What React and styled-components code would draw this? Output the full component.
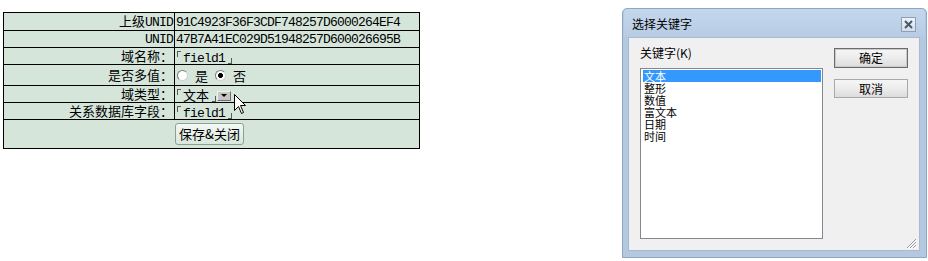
import React from "react"
import styled, { createGlobalStyle } from "styled-components"

const GlobalStyle = createGlobalStyle`
  body {
    margin: 0;
    background: #ffffff;
  }
`

const Page = styled.div`
  display: flex;
  align-items: flex-start;
  width: 928px;
  height: 261px;
  overflow: hidden;
  font-family: "Noto Sans CJK SC", sans-serif;
`

/* ---------- the Notes form ---------- */

const Form = styled.table`
  margin: 12px 0 0 3px;
  width: 417px;
  border-collapse: collapse;
  background: #d5e5da;
  font-family: "Noto Sans CJK SC", sans-serif;
  font-size: 13px;
  color: #000;
`

const Row = styled.tr`
  height: ${p => p.h}px;
`

const Label = styled.td`
  width: 169px;
  padding: 0 1px 0 0;
  border: 1px solid #000;
  text-align: right;
  white-space: nowrap;
  line-height: 14px;
`

const Value = styled.td`
  padding: 0 0 0 1px;
  border: 1px solid #000;
  white-space: nowrap;
  line-height: 14px;
`

const Wide = styled.td`
  padding: 0 0 0 171px;
  border: 1px solid #000;
`

const Mono = styled.span`
  font-family: "Liberation Mono", monospace;
  font-size: 13px;
  letter-spacing: -0.8px;
`

const Field = styled.span`
  display: inline-flex;
  height: 14px;
  vertical-align: middle;
  position: relative;
`

const Mark = styled.span`
  width: 3px;
  height: 5px;
  border-color: #5a5a5a;
  border-style: solid;
  border-width: ${p => (p.end ? "0 1px 1px 0" : "1px 0 0 1px")};
  align-self: ${p => (p.end ? "flex-end" : "flex-start")};
  margin: ${p => (p.end ? "0 1px 0 3px" : "1px 2px 0 1px")};
`

const FieldText = styled.span`
  line-height: 14px;
`

const Radios = styled.span`
  display: inline-flex;
  align-items: center;
  gap: 7px;
  vertical-align: middle;
  padding-left: 1px;
`

const Radio = styled.span`
  width: 11px;
  height: 11px;
  box-sizing: border-box;
  border-radius: 50%;
  border: 1px solid;
  border-color: #7a7a7a #d0d0d0 #d0d0d0 #7a7a7a;
  background: ${p =>
    p.checked
      ? "radial-gradient(circle, #000 0 2.2px, #fff 2.6px)"
      : "#fff"};
`

const DropButton = styled.span`
  width: 14px;
  height: 10px;
  align-self: flex-end;
  margin-bottom: 1px;
  box-sizing: border-box;
  background: #c6c6c6;
  border: 1px solid;
  border-color: #f0f0f0 #6f6f6f #6f6f6f #f0f0f0;
  display: flex;
  align-items: center;
  justify-content: center;

  &::after {
    content: "";
    border-left: 3px solid transparent;
    border-right: 3px solid transparent;
    border-top: 3px solid #000;
  }
`

const Pointer = styled.svg`
  position: absolute;
  left: 58px;
  top: 6px;
  pointer-events: none;
`

const SaveButton = styled.button`
  width: 69px;
  height: 22px;
  padding: 0;
  border: 1px solid #87a392;
  border-radius: 3px;
  background: linear-gradient(#f3f8f4, #d9e7dd);
  font-family: "Noto Sans CJK SC", sans-serif;
  font-size: 13px;
  line-height: 18px;
  color: #000;
  vertical-align: middle;
`

const Arrow = () => (
  <Pointer width="13" height="21" viewBox="0 0 13 21">
    <path
      d="M0.5 0.5 L0.5 16.5 L4.5 12.5 L7.5 19.5 L9.5 18.5 L6.5 11.5 L11.5 11.5 Z"
      fill="#fff"
      stroke="#000"
      strokeWidth="1"
    />
  </Pointer>
)

const NotesForm = () => (
  <Form>
    <tbody>
      <Row h={18}>
        <Label>
          上级<Mono>UNID</Mono>
        </Label>
        <Value>
          <Mono>91C4923F36F3CDF748257D6000264EF4</Mono>
        </Value>
      </Row>
      <Row h={17}>
        <Label>
          <Mono>UNID</Mono>
        </Label>
        <Value>
          <Mono>47B7A41EC029D51948257D600026695B</Mono>
        </Value>
      </Row>
      <Row h={17}>
        <Label>域名称：</Label>
        <Value>
          <Field>
            <Mark />
            <FieldText>
              <Mono>field1</Mono>
            </FieldText>
            <Mark end />
          </Field>
        </Value>
      </Row>
      <Row h={21}>
        <Label>是否多值：</Label>
        <Value>
          <Radios>
            <Radio />
            <span>是</span>
            <Radio checked />
            <span>否</span>
          </Radios>
        </Value>
      </Row>
      <Row h={17}>
        <Label>域类型：</Label>
        <Value>
          <Field>
            <Mark />
            <FieldText>文本</FieldText>
            <Mark end />
            <DropButton />
            <Arrow />
          </Field>
        </Value>
      </Row>
      <Row h={17}>
        <Label>关系数据库字段：</Label>
        <Value>
          <Field>
            <Mark />
            <FieldText>
              <Mono>field1</Mono>
            </FieldText>
            <Mark end />
          </Field>
        </Value>
      </Row>
      <Row h={29}>
        <Wide colSpan={2}>
          <SaveButton>保存&amp;关闭</SaveButton>
        </Wide>
      </Row>
    </tbody>
  </Form>
)

/* ---------- the keyword dialog ---------- */

const Dialog = styled.div`
  margin: 8px 1px 0 auto;
  width: 305px;
  height: 250px;
  box-sizing: border-box;
  display: flex;
  flex-direction: column;
  background: #b4c9e0;
  border: 1px solid #8ba6c7;
  border-radius: 5px 5px 0 0;
  padding: 0 6px 6px 5px;
  font-family: "Noto Sans CJK SC", sans-serif;
  font-size: 12px;
  color: #000;
`

const TitleBar = styled.div`
  height: 28px;
  flex: none;
  display: flex;
  align-items: center;
  justify-content: space-between;
  background: linear-gradient(#c4d7ec, #b7cce4);
  margin: 0 -5px 0 -4px;
  padding: 0 9px 0 8px;
  border-radius: 4px 4px 0 0;
`

const Title = styled.span`
  font-size: 12px;
  line-height: 14px;
  margin-top: 2px;
`

const CloseButton = styled.button`
  width: 15px;
  height: 15px;
  padding: 0;
  margin-top: 2px;
  box-sizing: border-box;
  border: 1px solid #8d9fb5;
  background: linear-gradient(#eef3f9, #d3deea);
  display: flex;
  align-items: center;
  justify-content: center;
`

const Client = styled.div`
  flex: 1;
  position: relative;
  display: grid;
  grid-template-columns: 183px 74px;
  column-gap: 11px;
  align-items: start;
  padding: 9px 0 0 11px;
  background: #f0f0f0;
  border: 1px solid #a5bbd5;
`

const Column = styled.div`
  display: flex;
  flex-direction: column;
`

const FieldLabel = styled.div`
  line-height: 12px;
  margin-bottom: 9px;
`

const ListBox = styled.div`
  width: 183px;
  height: 171px;
  box-sizing: border-box;
  border: 1px solid #828790;
  background: #fff;
  padding: 1px 1px 0 2px;
`

const Item = styled.div`
  height: 12px;
  line-height: 12px;
  font-size: 11px;
  padding-left: 1px;
  background: ${p => (p.selected ? "#3399ff" : "transparent")};
  color: ${p => (p.selected ? "#fff" : "#000")};
`

const Buttons = styled.div`
  display: flex;
  flex-direction: column;
  gap: 11px;
  margin-top: 1px;
`

const PushButton = styled.button`
  width: 74px;
  height: ${p => (p.primary ? 20 : 19)}px;
  padding: 0;
  box-sizing: border-box;
  border: 1px solid ${p => (p.primary ? "#6b6b6b" : "#a9a9a9")};
  box-shadow: ${p => (p.primary ? "inset 0 0 0 1px #c9c9c9" : "none")};
  background: linear-gradient(#f6f6f6 0%, #ececec 50%, #dcdcdc 100%);
  font-family: "Noto Sans CJK SC", sans-serif;
  font-size: 12px;
  line-height: 16px;
  color: #000;
`

const Grip = styled.svg`
  position: absolute;
  right: 2px;
  bottom: 1px;
`

const keywords = ["文本", "整形", "数值", "富文本", "日期", "时间"]

const KeywordDialog = () => (
  <Dialog>
    <TitleBar>
      <Title>选择关键字</Title>
      <CloseButton aria-label="关闭">
        <svg width="9" height="9" viewBox="0 0 9 9">
          <path d="M1 1 L8 8 M8 1 L1 8" stroke="#4b5868" strokeWidth="2" />
        </svg>
      </CloseButton>
    </TitleBar>
    <Client>
      <Column>
        <FieldLabel>关键字(K)</FieldLabel>
        <ListBox>
          {keywords.map((k, i) => (
            <Item key={k} selected={i === 0}>
              {k}
            </Item>
          ))}
        </ListBox>
      </Column>
      <Buttons>
        <PushButton primary>确定</PushButton>
        <PushButton>取消</PushButton>
      </Buttons>
      <Grip width="11" height="11" viewBox="0 0 11 11">
        <path
          d="M10 1 L1 10 M10 4 L4 10 M10 7 L7 10"
          stroke="#9a9a9a"
          strokeWidth="1"
        />
        <path
          d="M11 2 L2 11 M11 5 L5 11 M11 8 L8 11"
          stroke="#ffffff"
          strokeWidth="1"
        />
      </Grip>
    </Client>
  </Dialog>
)

const App = () => (
  <Page>
    <GlobalStyle />
    <NotesForm />
    <KeywordDialog />
  </Page>
)

export default App
